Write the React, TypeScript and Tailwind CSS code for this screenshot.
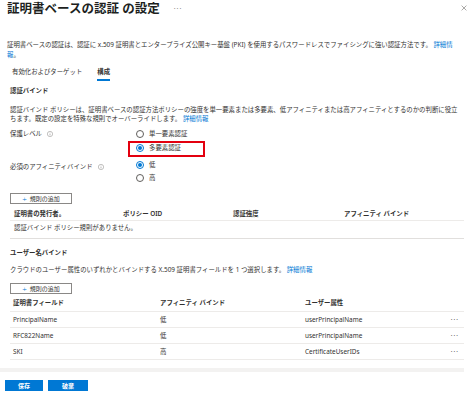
import React from 'react';

const Radio = ({ checked }: { checked?: boolean }) => (
  <span
    className={`flex h-[8px] w-[8px] shrink-0 items-center justify-center rounded-full border ${
      checked ? 'border-[#0078d4]' : 'border-[#605e5c]'
    }`}
  >
    {checked && <span className="h-[4px] w-[4px] rounded-full bg-[#0078d4]" />}
  </span>
);

const Info = () => (
  <svg width="6" height="6" viewBox="0 0 12 12" className="ml-[5px] shrink-0">
    <circle cx="6" cy="6" r="5.3" fill="none" stroke="#8a8886" strokeWidth="1" />
    <path d="M6 5.3v3.6M6 3.2v1" stroke="#8a8886" strokeWidth="1.2" />
  </svg>
);

const AddButton = () => (
  <button className="flex h-[11px] w-[62px] items-center justify-center gap-[3px] border border-[#8a8886] bg-white text-[6px] leading-none text-[#323130]">
    <span className="text-[8px] font-light leading-none text-[#0078d4]">+</span>
    規則の追加
  </button>
);

const Link = ({ children }: { children: React.ReactNode }) => <span className="text-[#0078d4]">{children}</span>;

const fields = [
  { field: 'PrincipalName', affinity: '低', attr: 'userPrincipalName' },
  { field: 'RFC822Name', affinity: '低', attr: 'userPrincipalName' },
  { field: 'SKI', affinity: '高', attr: 'CertificateUserIDs' },
];

export default function App() {
  return (
    <div className="h-[399px] w-[474px] overflow-hidden bg-white px-[7px] font-['Noto_Sans','Noto_Sans_CJK_JP',sans-serif] text-[6.4px] text-[#323130]">
      {/* header */}
      <div className="flex h-[18px] items-start justify-between">
        <div className="flex items-center">
          <h1 className="whitespace-nowrap text-[12.5px] font-semibold leading-[18px] text-[#201f1e]">証明書ベースの認証 の設定</h1>
          <span className="ml-[14px] text-[7px] leading-[18px] tracking-[1px] text-[#8a8886]">···</span>
        </div>
        <svg width="6" height="6" viewBox="0 0 10 10" className="mt-[5px]">
          <path d="M1 1l8 8M9 1l-8 8" stroke="#605e5c" strokeWidth="0.9" />
        </svg>
      </div>

      <p className="mt-[22px] whitespace-nowrap leading-[10px]">
        証明書ベースの認証は、認証に x.509 証明書とエンタープライズ公開キー基盤 (PKI) を使用するパスワードレスでファイシングに強い認証方法です。 <Link>詳細情</Link>
        <br />
        <Link>報</Link>。
      </p>

      {/* tabs */}
      <div className="mt-[7px] ml-[5px] flex gap-[15px]">
        <span className="border-b-2 border-transparent pb-[2px] leading-[10px]">有効化およびターゲット</span>
        <span className="border-b-2 border-[#0078d4] pb-[2px] font-semibold leading-[10px]">構成</span>
      </div>

      <div className="pl-[3px]">
        <h2 className="mt-[5px] font-semibold leading-[10px]">認証バインド</h2>
        <p className="mt-[9px] whitespace-nowrap leading-[9px]">
          認証バインド ポリシーは、証明書ベースの認証方法ポリシーの強度を単一要素または多要素、低アフィニティまたは高アフィニティとするのかの判断に役立
          <br />
          ちます。既定の設定を特殊な規則でオーバーライドします。 <Link>詳細情報</Link>
        </p>

        {/* protection level */}
        <div className="mt-[4px] flex">
          <div className="flex h-[14px] w-[126px] items-center">
            保護レベル
            <Info />
          </div>
          <div className="flex flex-col">
            <div className="flex h-[14px] items-center gap-[5px]">
              <Radio />
              単一要素認証
            </div>
            <div className="relative flex h-[14px] items-center gap-[5px]">
              <Radio checked />
              多要素認証
              <span className="absolute left-[-8px] top-0 h-[16px] w-[77px] border-2 border-[#e3000f]" />
            </div>
          </div>
        </div>

        {/* affinity */}
        <div className="mt-[3px] flex">
          <div className="mt-[2px] flex h-[13px] w-[126px] items-center">
            必須のアフィニティバインド
            <Info />
          </div>
          <div className="flex flex-col">
            <div className="flex h-[13px] items-center gap-[5px]">
              <Radio checked />低
            </div>
            <div className="flex h-[13px] items-center gap-[5px]">
              <Radio />高
            </div>
          </div>
        </div>

        <div className="mt-[9px]">
          <AddButton />
        </div>

        {/* binding rules table */}
        <div className="mt-[3px] mr-[3px]">
          <div className="flex h-[14px] items-center border-b border-[#edebe9] pl-[4px] font-semibold">
            <span className="w-[109px]">証明書の発行者。</span>
            <span className="w-[110px]">ポリシー OID</span>
            <span className="w-[111px]">認証強度</span>
            <span>アフィニティ バインド</span>
          </div>
          <div className="flex h-[18px] items-center border-b border-[#e1dfdd] pb-[3px] pl-[4px]">
            認証バインド ポリシー規則がありません。
          </div>
        </div>

        <h2 className="mt-[9px] font-semibold leading-[10px]">ユーザー名バインド</h2>
        <p className="mt-[7px] whitespace-nowrap leading-[10px]">
          クラウドのユーザー属性のいずれかとバインドする X.509 証明書フィールドを 1 つ選択します。 <Link>詳細情報</Link>
        </p>

        <div className="mt-[8px]">
          <AddButton />
        </div>

        {/* username binding table */}
        <div className="mt-[2px] mr-[3px]">
          <div className="flex h-[16px] items-center border-b border-[#edebe9] pb-[2px] pl-[3px] font-semibold">
            <span className="w-[147px]">証明書フィールド</span>
            <span className="w-[145px]">アフィニティ バインド</span>
            <span>ユーザー属性</span>
          </div>
          {fields.map((r) => (
            <div key={r.field} className="flex h-[16px] items-center border-b border-[#edebe9] pl-[3px] pr-[5px]">
              <span className="w-[147px]">{r.field}</span>
              <span className="w-[145px]">{r.affinity}</span>
              <span className="flex-1">{r.attr}</span>
              <span className="tracking-[1px] text-[#605e5c]">···</span>
            </div>
          ))}
        </div>
      </div>

      <div className="mt-[8px] -ml-[7px] h-[4px] w-[464px] bg-[#f3f2f1]" />

      <div className="mt-[8px] -ml-[2px] flex gap-[5px]">
        <button className="h-[11px] w-[38px] bg-[#0078d4] text-[6px] font-semibold leading-none text-white">保存</button>
        <button className="h-[11px] w-[40px] bg-[#0078d4] text-[6px] font-semibold leading-none text-white">破棄</button>
      </div>
    </div>
  );
}
